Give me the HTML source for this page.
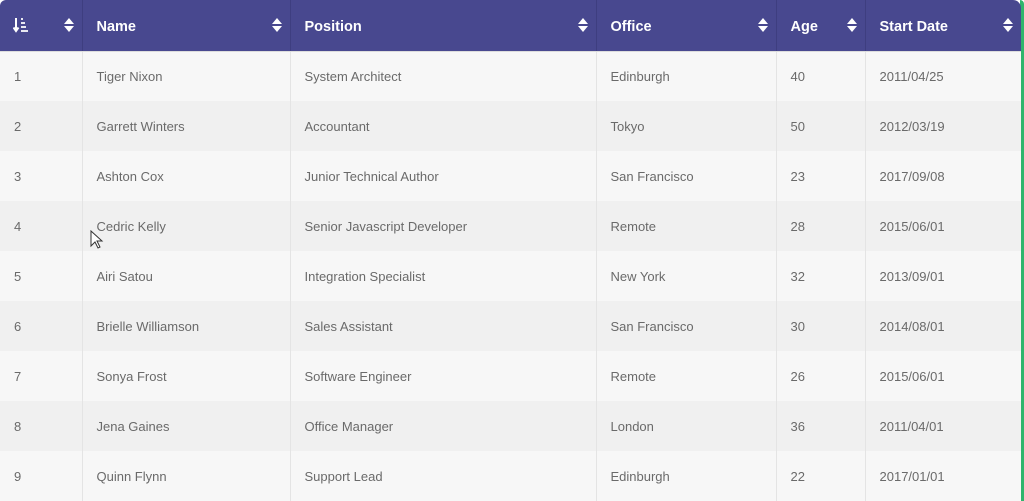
<!DOCTYPE html>
<html><head><meta charset="utf-8"><style>
html,body{margin:0;padding:0;background:#fff;width:1024px;height:501px;overflow:hidden}
body{font-family:"Liberation Sans",Arial,sans-serif}
.wrap{position:absolute;left:0;top:0;width:1024px;height:501px;background:#fff}
.g{position:absolute;right:0;top:0;width:4px;height:501px;background:#2fb56c;border-top-right-radius:6px}
table{position:absolute;left:0;top:0;width:1021px;border-collapse:collapse;table-layout:fixed}
th{background:#48488f;color:#fff;font-size:14.5px;font-weight:bold;text-align:left;height:51px;padding:3px 0 0 14px;position:relative;border-right:1px solid #3e3e80;box-sizing:border-box;border-bottom:1px solid #ddd}
th:last-child{border-right:none;border-top-right-radius:8px}
th:first-child{border-top-left-radius:6px}
td{height:50px;font-size:13px;color:#6a6a6a;padding:0 0 0 14px;border-right:1px solid #e4e4e4;box-sizing:border-box}
td:last-child{border-right:none}
tr:nth-child(odd) td{background:#f7f7f7}
tr:nth-child(even) td{background:#f0f0f0}
.s{position:absolute;right:8px;top:18px;width:10px;height:14px}
</style></head><body>
<div class="wrap">
<div class="g"></div>
<table>
<colgroup><col style="width:82px"><col style="width:208px"><col style="width:306px"><col style="width:180px"><col style="width:89px"><col style="width:156px"></colgroup>
<thead><tr>
<th><svg width="16" height="16" viewBox="0 0 16 16" style="position:absolute;left:13px;top:17px"><path d="M3 1v12M0.5 10.5L3 14l2.5-3.5" stroke="#fff" stroke-width="2" fill="none"/><path d="M8 2h2M8 6h4M8 10h5M8 14h7" stroke="#fff" stroke-width="1.8"/></svg><svg class="s" viewBox="0 0 10 14"><path d="M5 0L10 6H0z M5 14L0 8h10z" fill="#fff"/></svg></th>
<th>Name<svg class="s" viewBox="0 0 10 14"><path d="M5 0L10 6H0z M5 14L0 8h10z" fill="#fff"/></svg></th>
<th>Position<svg class="s" viewBox="0 0 10 14"><path d="M5 0L10 6H0z M5 14L0 8h10z" fill="#fff"/></svg></th>
<th>Office<svg class="s" viewBox="0 0 10 14"><path d="M5 0L10 6H0z M5 14L0 8h10z" fill="#fff"/></svg></th>
<th>Age<svg class="s" viewBox="0 0 10 14"><path d="M5 0L10 6H0z M5 14L0 8h10z" fill="#fff"/></svg></th>
<th>Start Date<svg class="s" viewBox="0 0 10 14"><path d="M5 0L10 6H0z M5 14L0 8h10z" fill="#fff"/></svg></th>
</tr></thead>
<tbody>
<tr><td>1</td><td>Tiger Nixon</td><td>System Architect</td><td>Edinburgh</td><td>40</td><td>2011/04/25</td></tr>
<tr><td>2</td><td>Garrett Winters</td><td>Accountant</td><td>Tokyo</td><td>50</td><td>2012/03/19</td></tr>
<tr><td>3</td><td>Ashton Cox</td><td>Junior Technical Author</td><td>San Francisco</td><td>23</td><td>2017/09/08</td></tr>
<tr><td>4</td><td>Cedric Kelly</td><td>Senior Javascript Developer</td><td>Remote</td><td>28</td><td>2015/06/01</td></tr>
<tr><td>5</td><td>Airi Satou</td><td>Integration Specialist</td><td>New York</td><td>32</td><td>2013/09/01</td></tr>
<tr><td>6</td><td>Brielle Williamson</td><td>Sales Assistant</td><td>San Francisco</td><td>30</td><td>2014/08/01</td></tr>
<tr><td>7</td><td>Sonya Frost</td><td>Software Engineer</td><td>Remote</td><td>26</td><td>2015/06/01</td></tr>
<tr><td>8</td><td>Jena Gaines</td><td>Office Manager</td><td>London</td><td>36</td><td>2011/04/01</td></tr>
<tr><td>9</td><td>Quinn Flynn</td><td>Support Lead</td><td>Edinburgh</td><td>22</td><td>2017/01/01</td></tr>
</tbody></table>
<svg width="14" height="20" viewBox="0 0 14 20" style="position:absolute;left:90px;top:230px"><path d="M1 1v15l4-4 3 6 2-1-3-6h5z" fill="#fff" stroke="#333" stroke-width="1"/></svg>
</div>
</body></html>
